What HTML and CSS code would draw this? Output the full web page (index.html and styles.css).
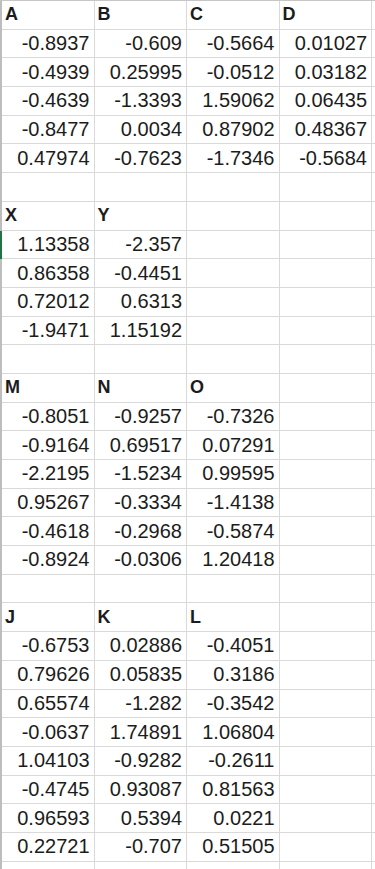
FILE: index.html
```html
<!DOCTYPE html>
<html>
<head>
<meta charset="utf-8">
<link rel="stylesheet" href="styles.css">
</head>
<body>
<div class="sheet">
  <div class="row"><i class="gut"></i><div class="c h">A</div><div class="c h">B</div><div class="c h">C</div><div class="c h">D</div><div class="c rest"></div></div>
  <div class="row"><i class="gut"></i><div class="c">-0.8937</div><div class="c">-0.609</div><div class="c">-0.5664</div><div class="c">0.01027</div><div class="c rest"></div></div>
  <div class="row"><i class="gut"></i><div class="c">-0.4939</div><div class="c">0.25995</div><div class="c">-0.0512</div><div class="c">0.03182</div><div class="c rest"></div></div>
  <div class="row"><i class="gut"></i><div class="c">-0.4639</div><div class="c">-1.3393</div><div class="c">1.59062</div><div class="c">0.06435</div><div class="c rest"></div></div>
  <div class="row"><i class="gut"></i><div class="c">-0.8477</div><div class="c">0.0034</div><div class="c">0.87902</div><div class="c">0.48367</div><div class="c rest"></div></div>
  <div class="row"><i class="gut"></i><div class="c">0.47974</div><div class="c">-0.7623</div><div class="c">-1.7346</div><div class="c">-0.5684</div><div class="c rest"></div></div>
  <div class="row"><i class="gut"></i><div class="c"></div><div class="c"></div><div class="c"></div><div class="c"></div><div class="c rest"></div></div>

  <div class="row"><i class="gut"></i><div class="c h">X</div><div class="c h">Y</div><div class="c"></div><div class="c"></div><div class="c rest"></div></div>
  <div class="row"><i class="gut sel"></i><div class="c">1.13358</div><div class="c">-2.357</div><div class="c"></div><div class="c"></div><div class="c rest"></div></div>
  <div class="row"><i class="gut"></i><div class="c">0.86358</div><div class="c">-0.4451</div><div class="c"></div><div class="c"></div><div class="c rest"></div></div>
  <div class="row"><i class="gut"></i><div class="c">0.72012</div><div class="c">0.6313</div><div class="c"></div><div class="c"></div><div class="c rest"></div></div>
  <div class="row"><i class="gut"></i><div class="c">-1.9471</div><div class="c">1.15192</div><div class="c"></div><div class="c"></div><div class="c rest"></div></div>
  <div class="row"><i class="gut"></i><div class="c"></div><div class="c"></div><div class="c"></div><div class="c"></div><div class="c rest"></div></div>

  <div class="row"><i class="gut"></i><div class="c h">M</div><div class="c h">N</div><div class="c h">O</div><div class="c"></div><div class="c rest"></div></div>
  <div class="row"><i class="gut"></i><div class="c">-0.8051</div><div class="c">-0.9257</div><div class="c">-0.7326</div><div class="c"></div><div class="c rest"></div></div>
  <div class="row"><i class="gut"></i><div class="c">-0.9164</div><div class="c">0.69517</div><div class="c">0.07291</div><div class="c"></div><div class="c rest"></div></div>
  <div class="row"><i class="gut"></i><div class="c">-2.2195</div><div class="c">-1.5234</div><div class="c">0.99595</div><div class="c"></div><div class="c rest"></div></div>
  <div class="row"><i class="gut"></i><div class="c">0.95267</div><div class="c">-0.3334</div><div class="c">-1.4138</div><div class="c"></div><div class="c rest"></div></div>
  <div class="row"><i class="gut"></i><div class="c">-0.4618</div><div class="c">-0.2968</div><div class="c">-0.5874</div><div class="c"></div><div class="c rest"></div></div>
  <div class="row"><i class="gut"></i><div class="c">-0.8924</div><div class="c">-0.0306</div><div class="c">1.20418</div><div class="c"></div><div class="c rest"></div></div>
  <div class="row"><i class="gut"></i><div class="c"></div><div class="c"></div><div class="c"></div><div class="c"></div><div class="c rest"></div></div>

  <div class="row"><i class="gut"></i><div class="c h">J</div><div class="c h">K</div><div class="c h">L</div><div class="c"></div><div class="c rest"></div></div>
  <div class="row"><i class="gut"></i><div class="c">-0.6753</div><div class="c">0.02886</div><div class="c">-0.4051</div><div class="c"></div><div class="c rest"></div></div>
  <div class="row"><i class="gut"></i><div class="c">0.79626</div><div class="c">0.05835</div><div class="c">0.3186</div><div class="c"></div><div class="c rest"></div></div>
  <div class="row"><i class="gut"></i><div class="c">0.65574</div><div class="c">-1.282</div><div class="c">-0.3542</div><div class="c"></div><div class="c rest"></div></div>
  <div class="row"><i class="gut"></i><div class="c">-0.0637</div><div class="c">1.74891</div><div class="c">1.06804</div><div class="c"></div><div class="c rest"></div></div>
  <div class="row"><i class="gut"></i><div class="c">1.04103</div><div class="c">-0.9282</div><div class="c">-0.2611</div><div class="c"></div><div class="c rest"></div></div>
  <div class="row"><i class="gut"></i><div class="c">-0.4745</div><div class="c">0.93087</div><div class="c">0.81563</div><div class="c"></div><div class="c rest"></div></div>
  <div class="row"><i class="gut"></i><div class="c">0.96593</div><div class="c">0.5394</div><div class="c">0.0221</div><div class="c"></div><div class="c rest"></div></div>
  <div class="row"><i class="gut"></i><div class="c">0.22721</div><div class="c">-0.707</div><div class="c">0.51505</div><div class="c"></div><div class="c rest"></div></div>
  <div class="row"><i class="gut"></i><div class="c"></div><div class="c"></div><div class="c"></div><div class="c"></div><div class="c rest"></div></div>
</div>
</body>
</html>
```
FILE: styles.css
```css
html, body {
  margin: 0;
  padding: 0;
  background: #ffffff;
}
body {
  font-family: "Liberation Sans", Arial, sans-serif;
  color: #1c1c1c;
  overflow: hidden;
  height: 869px;
}
.sheet {
  border-top: 1px solid #c6c6c6;
}
.row {
  display: flex;
  height: 28.7px;
}
.gut {
  flex: 0 0 2px;
  background: #bdbdbd;
}
.gut.sel {
  background: #217346;
}
.c {
  box-sizing: border-box;
  flex: 0 0 92.5px;
  border-right: 1px solid #d9d9d9;
  border-bottom: 1px solid #d9d9d9;
  display: flex;
  align-items: center;
  justify-content: flex-end;
  padding: 0 4px 0 2px;
  font-size: 20px;
  white-space: nowrap;
  overflow: hidden;
}
.c.h {
  justify-content: flex-start;
  font-weight: bold;
  font-size: 18px;
  padding-left: 3px;
}
.c.rest {
  flex: 1 1 auto;
  border-right: none;
}
```
